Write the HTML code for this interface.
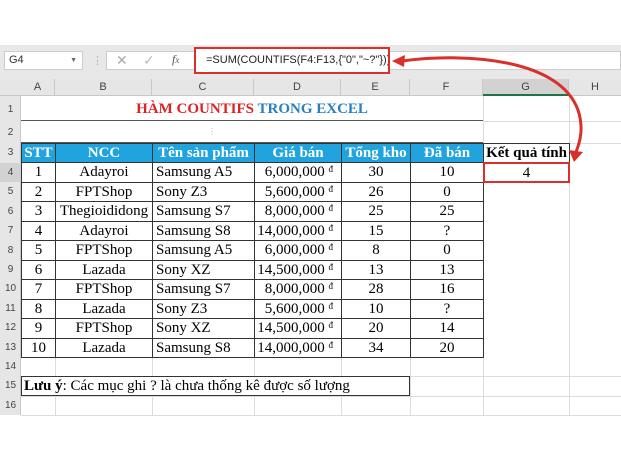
<!DOCTYPE html>
<html><head><meta charset="utf-8"><style>
*{margin:0;padding:0;box-sizing:border-box}
body{width:621px;height:450px;background:#fff;position:relative;overflow:hidden;font-family:"Liberation Serif",serif}
.a{position:absolute}
.bar{left:0;top:45px;width:621px;height:34px;background:#e8e8e8}
.hdr{top:79px;height:17px;background:#e6e6e6;border-bottom:1px solid #c8c8c8;font:11px "Liberation Sans",sans-serif;color:#444;text-align:center;line-height:17px}
.rh{left:0;width:21px;background:#e6e6e6;border-right:1px solid #c8c8c8}
.gl{background:#dcdcdc}
.c{position:absolute;font-size:15px;color:#000;white-space:nowrap;overflow:hidden;text-align:center}
.th{background:#21a3dd;color:#fff;font-weight:bold;border:1px solid #333}
.d{font-size:9px;vertical-align:4px;line-height:0}
table{border-collapse:collapse;font-size:15px;font-family:'Liberation Serif',serif;table-layout:fixed}
tr{height:19.5px}
td{border:1px solid #333;height:19.5px;padding:0;line-height:14px;text-align:center;white-space:nowrap;overflow:hidden}
td:nth-child(3){text-align:left;padding-left:3px}
td:nth-child(4){text-align:right;padding-right:8px}
</style></head><body>
<div class="a bar"></div>
<div class="a" style="left:4px;top:51px;width:79px;height:19px;background:#fff;border:1px solid #ccc;font:11px 'Liberation Sans',sans-serif;line-height:17px;padding-left:4px;color:#333">G4<span style="position:absolute;right:5px;font-size:7px;color:#666">▼</span></div>
<div class="a" style="left:92px;top:54px;color:#aaa;font:11px 'Liberation Sans',sans-serif">⋮</div>
<div class="a" style="left:106px;top:51px;width:515px;height:19px;background:#fff;border:1px solid #ccc"></div>
<div class="a" style="left:116px;top:52px;color:#aaa;font:14px 'Liberation Sans',sans-serif">✕</div>
<div class="a" style="left:143px;top:52px;color:#bbb;font:14px 'Liberation Sans',sans-serif">✓</div>
<div class="a" style="left:172px;top:52px;color:#555;font:italic 12px 'Liberation Serif',serif">f<span style="font-size:9px">x</span></div>
<div class="a" style="left:194px;top:47px;width:196px;height:27px;border:2px solid #d9302c;background:#fff;font:11px 'Liberation Sans',sans-serif;line-height:23px;padding-left:10px;color:#222;white-space:nowrap;overflow:hidden">=SUM(COUNTIFS(F4:F13,{"0","~?"}))</div>

<div class="a hdr" style="left:0;width:21px"></div>
<div class="a hdr" style="left:21px;width:34px;border-right:1px solid #c8c8c8">A</div>
<div class="a hdr" style="left:55px;width:97px;border-right:1px solid #c8c8c8">B</div>
<div class="a hdr" style="left:152px;width:102px;border-right:1px solid #c8c8c8">C</div>
<div class="a hdr" style="left:254px;width:87px;border-right:1px solid #c8c8c8">D</div>
<div class="a hdr" style="left:341px;width:69px;border-right:1px solid #c8c8c8">E</div>
<div class="a hdr" style="left:410px;width:73px;border-right:1px solid #c8c8c8">F</div>
<div class="a hdr" style="left:483px;width:86px;background:#d2d2d2;border-bottom:2px solid #217346;border-right:1px solid #c8c8c8">G</div>
<div class="a hdr" style="left:569px;width:52px">H</div>

<div class="a rh" style="top:96px;height:319px"></div>
<div class="a" style="left:0;top:96px;width:21px;font:10px 'Liberation Sans',sans-serif;color:#444;text-align:center">
<div style="height:25px;line-height:28px">1</div><div style="height:22px;line-height:24px">2</div><div style="height:20px;line-height:20px">3</div>
<div style="height:19.4px;line-height:20px;background:#d2d2d2">4</div><div style="height:19.4px;line-height:20px">5</div><div style="height:19.4px;line-height:20px">6</div><div style="height:19.4px;line-height:20px">7</div><div style="height:19.4px;line-height:20px">8</div><div style="height:19.4px;line-height:20px">9</div><div style="height:19.4px;line-height:20px">10</div><div style="height:19.4px;line-height:20px">11</div><div style="height:19.4px;line-height:20px">12</div><div style="height:19.4px;line-height:20px">13</div><div style="height:19.4px;line-height:20px">14</div><div style="height:19.4px;line-height:20px">15</div><div style="height:19.4px;line-height:20px">16</div></div>

<div class="a gl" style="left:483px;top:96px;width:1px;height:319px"></div>
<div class="a gl" style="left:569px;top:96px;width:1px;height:319px"></div>
<div class="a gl" style="left:483px;top:121px;width:138px;height:1px"></div>
<div class="a gl" style="left:483px;top:143px;width:138px;height:1px"></div>
<div class="a gl" style="left:21px;top:376px;width:600px;height:1px"></div>
<div class="a gl" style="left:21px;top:396px;width:600px;height:1px"></div>
<div class="a gl" style="left:21px;top:415px;width:600px;height:1px"></div>
<div class="a gl" style="left:55px;top:357px;width:1px;height:58px"></div>
<div class="a gl" style="left:152px;top:357px;width:1px;height:58px"></div>
<div class="a gl" style="left:254px;top:357px;width:1px;height:58px"></div>
<div class="a gl" style="left:341px;top:357px;width:1px;height:58px"></div>
<div class="a gl" style="left:410px;top:357px;width:1px;height:58px"></div>

<div class="a" style="left:21px;top:96px;width:462px;height:25px;border-bottom:1px solid #555;text-align:center;font-weight:bold;font-size:15px;line-height:26px"><span style="color:#d22">HÀM COUNTIFS</span> <span style="color:#2a7fc0">TRONG EXCEL</span></div>
<div class="a" style="left:21px;top:121px;width:462px;height:22px;border-bottom:1px solid #555"></div>
<div class="a" style="left:208px;top:127px;color:#aaa;font-size:8px">⋮</div>

<div class="c th" style="left:21px;top:143px;width:35px;height:20px;line-height:18px">STT</div>
<div class="c th" style="left:55px;top:143px;width:98px;height:20px;line-height:18px">NCC</div>
<div class="c th" style="left:152px;top:143px;width:103px;height:20px;line-height:18px">Tên sản phẩm</div>
<div class="c th" style="left:254px;top:143px;width:88px;height:20px;line-height:18px">Giá bán</div>
<div class="c th" style="left:341px;top:143px;width:70px;height:20px;line-height:18px">Tổng kho</div>
<div class="c th" style="left:410px;top:143px;width:74px;height:20px;line-height:18px">Đã bán</div>
<div class="c" style="left:483px;top:143px;width:87px;height:20px;line-height:18px;font-weight:bold;border:1px solid #333">Kết quả tính</div>

<div class="a" style="left:21px;top:162px;">
<table>
<colgroup><col style="width:34px"><col style="width:97px"><col style="width:102px"><col style="width:87px"><col style="width:69px"><col style="width:73px"></colgroup>
<tr><td>1</td><td>Adayroi</td><td>Samsung A5</td><td>6,000,000 <span class="d">đ</span></td><td>30</td><td>10</td></tr>
<tr><td>2</td><td>FPTShop</td><td>Sony Z3</td><td>5,600,000 <span class="d">đ</span></td><td>26</td><td>0</td></tr>
<tr><td>3</td><td>Thegioididong</td><td>Samsung S7</td><td>8,000,000 <span class="d">đ</span></td><td>25</td><td>25</td></tr>
<tr><td>4</td><td>Adayroi</td><td>Samsung S8</td><td>14,000,000 <span class="d">đ</span></td><td>15</td><td>?</td></tr>
<tr><td>5</td><td>FPTShop</td><td>Samsung A5</td><td>6,000,000 <span class="d">đ</span></td><td>8</td><td>0</td></tr>
<tr><td>6</td><td>Lazada</td><td>Sony XZ</td><td>14,500,000 <span class="d">đ</span></td><td>13</td><td>13</td></tr>
<tr><td>7</td><td>FPTShop</td><td>Samsung S7</td><td>8,000,000 <span class="d">đ</span></td><td>28</td><td>16</td></tr>
<tr><td>8</td><td>Lazada</td><td>Sony Z3</td><td>5,600,000 <span class="d">đ</span></td><td>10</td><td>?</td></tr>
<tr><td>9</td><td>FPTShop</td><td>Sony XZ</td><td>14,500,000 <span class="d">đ</span></td><td>20</td><td>14</td></tr>
<tr><td>10</td><td>Lazada</td><td>Samsung S8</td><td>14,000,000 <span class="d">đ</span></td><td>34</td><td>20</td></tr>
</table></div>
<div class="c" style="left:483px;top:162px;width:87px;height:21px;line-height:18px;border:2px solid #d9302c">4</div>

<div class="c" style="left:21px;top:376px;width:389px;height:20px;border:1px solid #333;text-align:left;padding-left:2px;line-height:18px;background:#fff"><b>Lưu ý</b>: Các mục ghi ? là chưa thống kê được số lượng</div>

<svg class="a" style="left:0;top:0" width="621" height="450">
<path d="M402 61 C 470 52, 560 60, 578 110 C 584 128, 580 142, 576 152" fill="none" stroke="#d9302c" stroke-width="3"/>
<polygon points="392,61 405,55 404,67" fill="#d9302c"/>
<polygon points="569,150 583,152 574,162" fill="#d9302c"/>
</svg>
</body></html>
